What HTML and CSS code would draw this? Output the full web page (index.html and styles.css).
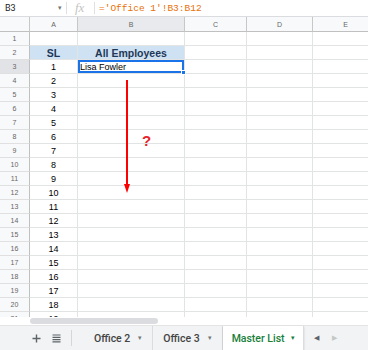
FILE: index.html
```html
<!DOCTYPE html>
<html lang="en">
<head>
    <meta charset="UTF-8">
    <meta name="viewport" content="width=device-width, initial-scale=1.0">
    <title>Master List</title>
    <link rel="stylesheet" href="styles.css">
</head>
<body>
    <div class="sheet">
        <div class="formula-bar">
            <div class="name-box"><span>B3</span><span class="caret">&#9662;</span></div>
            <div class="fx">fx</div>
            <div class="formula">='Office 1'!B3:B12</div>
        </div>

        <div class="grid-wrap">
            <table class="grid">
                <thead>
                    <tr>
                        <th class="corner"></th>
                        <th class="col-a">A</th>
                        <th class="col-b active">B</th>
                        <th class="col-c">C</th>
                        <th class="col-d">D</th>
                        <th class="col-e">E</th>
                    </tr>
                </thead>
                <tbody>
                    <tr><th>1</th><td></td><td></td><td></td><td></td><td></td></tr>
                    <tr class="title"><th>2</th><td class="head">SL</td><td class="head">All Employees</td><td></td><td></td><td></td></tr>
                    <tr><th class="active">3</th><td class="num">1</td><td class="selected">Lisa Fowler<span class="handle"></span></td><td></td><td></td><td></td></tr>
                    <tr><th>4</th><td class="num">2</td><td></td><td></td><td></td><td></td></tr>
                    <tr><th>5</th><td class="num">3</td><td></td><td></td><td></td><td></td></tr>
                    <tr><th>6</th><td class="num">4</td><td></td><td></td><td></td><td></td></tr>
                    <tr><th>7</th><td class="num">5</td><td></td><td></td><td></td><td></td></tr>
                    <tr><th>8</th><td class="num">6</td><td></td><td></td><td></td><td></td></tr>
                    <tr><th>9</th><td class="num">7</td><td></td><td></td><td></td><td></td></tr>
                    <tr><th>10</th><td class="num">8</td><td></td><td></td><td></td><td></td></tr>
                    <tr><th>11</th><td class="num">9</td><td></td><td></td><td></td><td></td></tr>
                    <tr><th>12</th><td class="num">10</td><td></td><td></td><td></td><td></td></tr>
                    <tr><th>13</th><td class="num">11</td><td></td><td></td><td></td><td></td></tr>
                    <tr><th>14</th><td class="num">12</td><td></td><td></td><td></td><td></td></tr>
                    <tr><th>15</th><td class="num">13</td><td></td><td></td><td></td><td></td></tr>
                    <tr><th>16</th><td class="num">14</td><td></td><td></td><td></td><td></td></tr>
                    <tr><th>17</th><td class="num">15</td><td></td><td></td><td></td><td></td></tr>
                    <tr><th>18</th><td class="num">16</td><td></td><td></td><td></td><td></td></tr>
                    <tr><th>19</th><td class="num">17</td><td></td><td></td><td></td><td></td></tr>
                    <tr><th>20</th><td class="num">18</td><td></td><td></td><td></td><td></td></tr>
                    <tr><th>21</th><td class="num">19</td><td></td><td></td><td></td><td></td></tr>
                </tbody>
            </table>

            <svg class="drag-arrow" width="10" height="115" viewBox="0 0 10 115">
                <line x1="5" y1="0" x2="5" y2="106" stroke="#f00" stroke-width="2"/>
                <polygon points="2,104 8,104 5,113" fill="#f00"/>
            </svg>
            <span class="question">?</span>
        </div>

        <div class="hscroll"><div class="thumb"></div></div>

        <div class="tabs">
            <div class="tab-tools">
                <svg class="tool" width="9" height="9" viewBox="0 0 9 9">
                    <path d="M4.5 0.5v8M0.5 4.5h8" stroke="#5f6368" stroke-width="1.4"/>
                </svg>
                <svg class="tool" width="9" height="9" viewBox="0 0 9 9">
                    <path d="M0.5 1h8M0.5 3.3h8M0.5 5.6h8M0.5 7.9h8" stroke="#5f6368" stroke-width="1.2"/>
                </svg>
            </div>
            <div class="tab">Office 2 <span class="tab-caret">&#9662;</span></div>
            <div class="tab">Office 3 <span class="tab-caret">&#9662;</span></div>
            <div class="tab current">Master List <span class="tab-caret">&#9662;</span></div>
            <div class="tab-nav">
                <span class="nav-left">&#9664;</span>
                <span class="nav-right">&#9654;</span>
            </div>
        </div>
    </div>
</body>
</html>
```

FILE: styles.css
```css
body {
    margin: 0;
    font-family: Arial, "Liberation Sans", sans-serif;
    background: #fff;
    overflow: hidden;
}
.sheet {
    width: 368px;
    height: 350px;
    display: flex;
    flex-direction: column;
    overflow: hidden;
}

/* formula bar */
.formula-bar {
    height: 16px;
    flex: none;
    display: flex;
    align-items: center;
    border-bottom: 1px solid #dadce0;
    box-sizing: content-box;
    font-size: 9px;
}
.name-box {
    width: 61px;
    padding-left: 5px;
    display: flex;
    justify-content: space-between;
    align-items: center;
    color: #222;
    border-right: 1px solid #e0e0e0;
    height: 12px;
    font-family: Roboto, sans-serif;
}
.name-box .caret {
    color: #777;
    font-size: 7px;
    margin-right: 4px;
}
.fx {
    width: 28px;
    padding-left: 8px;
    box-sizing: border-box;
    font-family: "Liberation Serif", serif;
    font-style: italic;
    font-size: 13px;
    color: #c4c4c4;
    border-right: 1px solid #e0e0e0;
    height: 12px;
    line-height: 11px;
}
.formula {
    padding-left: 4px;
    font-family: "Liberation Mono", monospace;
    font-size: 9.5px;
    color: #e8710a;
    white-space: nowrap;
}

/* grid */
.grid-wrap {
    position: relative;
    flex: 1;
    overflow: hidden;
}
.grid {
    border-collapse: separate;
    border-spacing: 0;
    table-layout: fixed;
    width: 379px;
}
.grid th,
.grid td {
    box-sizing: border-box;
    height: 14px;
    padding: 0;
    border-right: 1px solid #e2e3e3;
    border-bottom: 1px solid #e2e3e3;
    white-space: nowrap;
    overflow: hidden;
}
.grid thead th {
    height: 15px;
    background: #f8f9fa;
    color: #666;
    font-size: 7px;
    font-weight: normal;
    border-right-color: #c7c7c7;
    border-bottom: 1px solid #c0c0c0;
}
.grid tbody th {
    background: #f8f9fa;
    color: #666;
    font-size: 7px;
    font-weight: normal;
    border-right: 1px solid #c0c0c0;
    border-bottom-color: #e0e0e0;
}
.grid th.active {
    background: #e8eaed;
}
.grid tbody th.active {
    background: #e1e3e6;
}
.corner { width: 30px; }
.col-a { width: 48px; }
.col-b { width: 107px; }
.col-c { width: 62px; }
.col-d { width: 66px; }
.col-e { width: 66px; }

.head {
    background: #cfe2f3;
    color: #1e3857;
    font-weight: bold;
    font-size: 10.5px;
    text-align: center;
}
.num {
    text-align: center;
    font-size: 9px;
    color: #000;
}
.selected {
    position: relative;
    font-size: 9px;
    padding-left: 2px !important;
    color: #000;
    box-shadow: inset 0 0 0 2px #1a73e8;
    overflow: visible !important;
}
.handle {
    position: absolute;
    right: -2px;
    bottom: -2px;
    width: 5px;
    height: 5px;
    background: #1a73e8;
    border: 1px solid #fff;
    box-sizing: border-box;
}

/* drawn annotations */
.drag-arrow {
    position: absolute;
    left: 122px;
    top: 63px;
}
.question {
    position: absolute;
    left: 142px;
    top: 115px;
    color: #e8232b;
    font-weight: bold;
    font-size: 15px;
    line-height: 18px;
}

/* horizontal scroll strip */
.hscroll {
    height: 8px;
    flex: none;
    background: #fff;
}
.thumb {
    margin: 1px 0 0 30px;
    width: 128px;
    height: 6px;
    background: #dadce0;
    border-radius: 3px;
}

/* sheet tabs */
.tabs {
    height: 25px;
    flex: none;
    display: flex;
    background: #f1f3f4;
    border-top: 1px solid #e4e4e4;
    box-sizing: border-box;
    font-family: Roboto, sans-serif;
    font-size: 10.5px;
    color: #444;
}
.tab-tools {
    width: 84px;
    display: flex;
    align-items: center;
    padding-left: 32px;
    box-sizing: border-box;
    gap: 11px;
    position: relative;
}
.tab-tools::after {
    content: "";
    position: absolute;
    left: 71px;
    top: 4px;
    bottom: 4px;
    border-left: 1px solid #d6d6d6;
}
.tab {
    display: flex;
    align-items: center;
    gap: 8px;
    padding: 0 10px 0 10px;
    border-right: 1px solid #dadce0;
    white-space: nowrap;
    font-weight: 500;
}
.tab-caret {
    font-size: 7px;
    color: #777;
}
.tab.current {
    background: #fff;
    color: #188038;
    padding: 0 8px 0 9px;
    gap: 6px;
    box-shadow: 0 1px 2px rgba(0, 0, 0, 0.15);
}
.tab.current .tab-caret {
    color: #188038;
}
.tab-nav {
    display: flex;
    align-items: center;
    gap: 13px;
    padding-left: 10px;
    font-size: 7px;
}
.nav-left { color: #5f6368; }
.nav-right { color: #c4c7c5; }
```
